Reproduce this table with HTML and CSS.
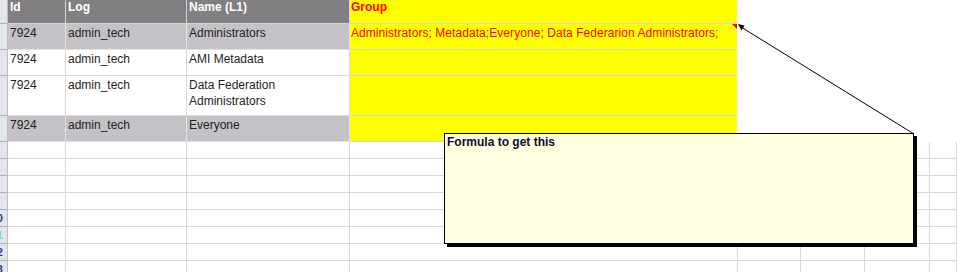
FILE: index.html
```html
<!DOCTYPE html>
<html lang="en">
<head>
    <meta charset="UTF-8">
    <meta name="viewport" content="width=device-width, initial-scale=1.0">
    <title>Groups</title>
    <link rel="stylesheet" href="styles.css">
</head>
<body>

    <div class="sheet">
        <div class="row head">
            <div class="rh"></div>
            <div class="c">Id</div>
            <div class="c">Log</div>
            <div class="c">Name (L1)</div>
            <div class="c grp">Group</div>
            <div class="c off"></div><div class="c off"></div><div class="c off"></div><div class="c off"></div>
        </div>
        <div class="row r26 gray">
            <div class="rh"></div>
            <div class="c">7924</div>
            <div class="c">admin_tech</div>
            <div class="c">Administrators</div>
            <div class="c grp">Administrators; Metadata;Everyone; Data Federarion Administrators;<span class="flag"></span></div>
            <div class="c off"></div><div class="c off"></div><div class="c off"></div><div class="c off"></div>
        </div>
        <div class="row r26">
            <div class="rh"></div>
            <div class="c">7924</div>
            <div class="c">admin_tech</div>
            <div class="c">AMI Metadata</div>
            <div class="c grp"></div>
            <div class="c off"></div><div class="c off"></div><div class="c off"></div><div class="c off"></div>
        </div>
        <div class="row r40">
            <div class="rh"></div>
            <div class="c">7924</div>
            <div class="c">admin_tech</div>
            <div class="c wrap">Data Federation<br>Administrators</div>
            <div class="c grp"></div>
            <div class="c off"></div><div class="c off"></div><div class="c off"></div><div class="c off"></div>
        </div>
        <div class="row r26 gray">
            <div class="rh"></div>
            <div class="c">7924</div>
            <div class="c">admin_tech</div>
            <div class="c">Everyone</div>
            <div class="c grp"></div>
            <div class="c off"></div><div class="c off"></div><div class="c off"></div><div class="c off"></div>
        </div>

        <!-- empty rows -->
        <div class="row r17"><div class="rh"></div><div class="c"></div><div class="c"></div><div class="c"></div><div class="c"></div><div class="c"></div><div class="c"></div><div class="c"></div><div class="c"></div></div>
        <div class="row r17"><div class="rh"></div><div class="c"></div><div class="c"></div><div class="c"></div><div class="c"></div><div class="c"></div><div class="c"></div><div class="c"></div><div class="c"></div></div>
        <div class="row r17"><div class="rh"></div><div class="c"></div><div class="c"></div><div class="c"></div><div class="c"></div><div class="c"></div><div class="c"></div><div class="c"></div><div class="c"></div></div>
        <div class="row r17"><div class="rh"></div><div class="c"></div><div class="c"></div><div class="c"></div><div class="c"></div><div class="c"></div><div class="c"></div><div class="c"></div><div class="c"></div></div>
        <div class="row r17"><div class="rh"><span>10</span></div><div class="c"></div><div class="c"></div><div class="c"></div><div class="c"></div><div class="c"></div><div class="c"></div><div class="c"></div><div class="c"></div></div>
        <div class="row r17"><div class="rh sel"><span>11</span></div><div class="c"></div><div class="c"></div><div class="c"></div><div class="c"></div><div class="c"></div><div class="c"></div><div class="c"></div><div class="c"></div></div>
        <div class="row r17"><div class="rh"><span>12</span></div><div class="c"></div><div class="c"></div><div class="c"></div><div class="c"></div><div class="c"></div><div class="c"></div><div class="c"></div><div class="c"></div></div>
        <div class="row r17"><div class="rh"><span>13</span></div><div class="c"></div><div class="c"></div><div class="c"></div><div class="c"></div><div class="c"></div><div class="c"></div><div class="c"></div><div class="c"></div></div>
    </div>

    <!-- comment pointer -->
    <svg class="pointer" width="957" height="272">
        <line x1="741" y1="27" x2="914" y2="134" stroke="#000" stroke-width="1"/>
        <polygon points="738,24 744.5,25.5 741.5,30.5" fill="#000"/>
    </svg>

    <div class="note">Formula to get this</div>

</body>
</html>
```

FILE: styles.css
```css
* {
    box-sizing: border-box;
}
body {
    margin: 0;
    background: #fff;
    font-family: "Liberation Sans", Arial, sans-serif;
    font-size: 12px;
    color: #1e1e1e;
    overflow: hidden;
    position: relative;
    height: 272px;
}

.sheet {
    display: flex;
    flex-direction: column;
}
.row {
    display: grid;
    grid-template-columns: 8px 58px 121px 163px 388px 63px 64px 65px 1fr;
    height: 17px;
}
.row.head { height: 24px; }
.row.r26 { height: 26px; }
.row.r40 { height: 40px; }
.row.r17 { height: 17px; }

.c {
    border-right: 1px solid #d9d9d9;
    border-bottom: 1px solid #d9d9d9;
    padding: 1px 2px 0 2px;
    line-height: 16px;
    white-space: nowrap;
    overflow: hidden;
}
.c.off {
    border-color: transparent;
}

/* header row */
.head .c {
    background: #817f82;
    color: #fff;
    font-weight: bold;
    line-height: 14px;
    padding-top: 0;
    border-color: #d4d4d4;
}
.gray .c {
    background: #c4c2c6;
    border-color: #e2e2e2;
}
.head .c.off, .gray .c.off {
    background: #fff;
    border-color: transparent;
}

/* the group column */
.c.grp, .head .c.grp, .gray .c.grp {
    background: #ffff00;
    color: #ff0000;
    border-bottom-color: #d6d6d6;
    border-right-color: #fff;
    padding-left: 1px;
    letter-spacing: 0.06px;
    position: relative;
}
.head .c.grp {
    letter-spacing: 0;
}
.r17 .c.grp {
    background: #fff;
    border-right-color: #d9d9d9;
}

/* comment marker in the corner */
.flag {
    position: absolute;
    top: 0;
    right: 0;
    width: 0;
    height: 0;
    border-top: 5px solid #ff0000;
    border-left: 5px solid transparent;
}

/* row headers on the left, scrolled so only the last digit edge shows */
.rh {
    background: #e3e6eb;
    border-right: 1px solid #b9bfc7;
    border-bottom: 1px solid #a9b0b9;
    display: flex;
    justify-content: flex-end;
    padding-right: 4px;
    overflow: hidden;
}
.rh span {
    font-size: 11px;
    font-weight: bold;
    line-height: 16px;
    color: #2c3c7c;
    flex-shrink: 0;
}
.rh.sel span {
    color: #7fd6ea;
}

.pointer {
    position: absolute;
    left: 0;
    top: 0;
    pointer-events: none;
}

.note {
    position: absolute;
    left: 444px;
    top: 133px;
    width: 470px;
    height: 111px;
    background: #ffffe1;
    border: 1px solid #000;
    box-shadow: 3px 3px 0 #000;
    padding: 1px 2px;
    font-weight: bold;
    font-size: 12px;
    line-height: 14px;
    color: #0a0f2a;
}
```
